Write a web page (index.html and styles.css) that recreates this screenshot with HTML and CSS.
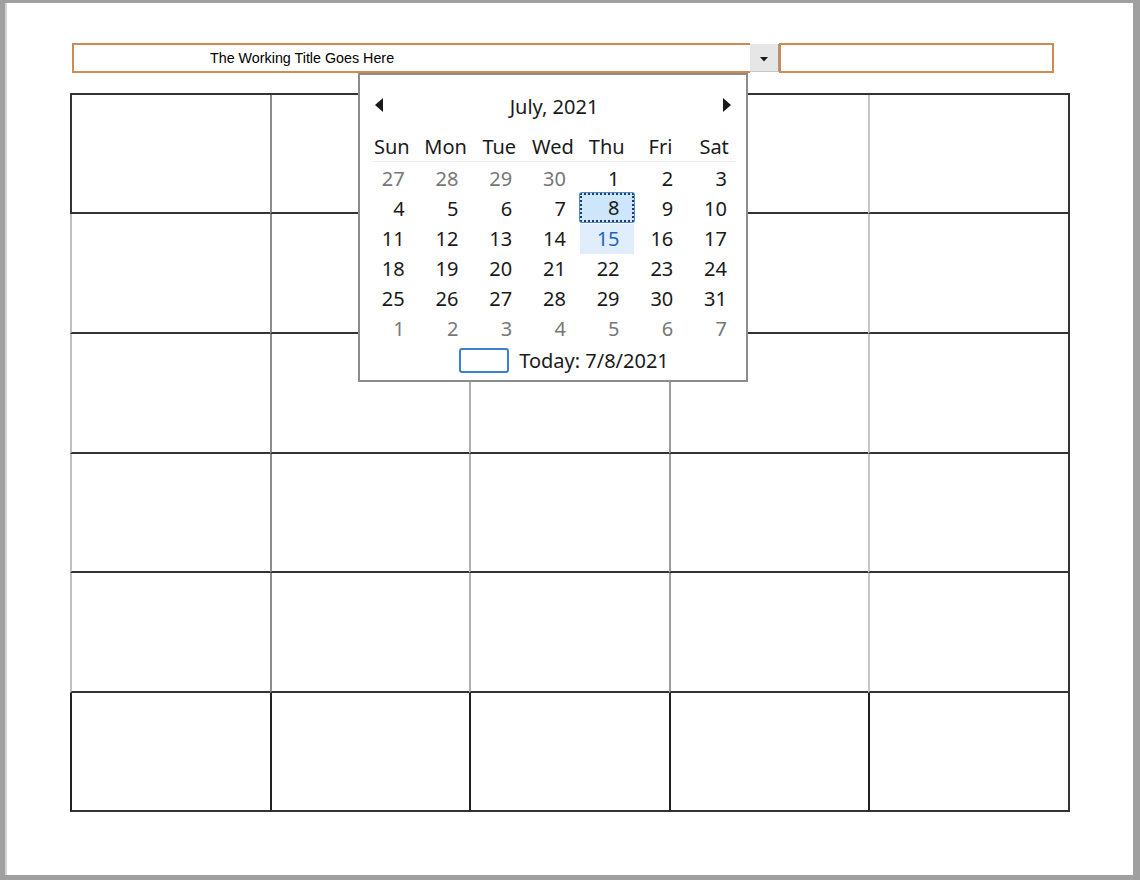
FILE: index.html
```html
<!DOCTYPE html>
<html>
<head>
<meta charset="utf-8">
<title>Calendar</title>
<link rel="stylesheet" href="styles.css">
</head>
<body>
<div class="page">
  <div class="title-row">
    <div class="title-box">The Working Title Goes Here</div>
    <div class="drop-btn">
      <svg width="8" height="5" viewBox="0 0 8 5"><polygon points="0,0 8,0 4,4.5" fill="#1a1a1a"/></svg>
    </div>
    <div class="side-box"></div>
  </div>

  <div class="grid">
    <div class="cell"></div><div class="cell"></div><div class="cell"></div><div class="cell"></div><div class="cell"></div>
    <div class="cell"></div><div class="cell"></div><div class="cell"></div><div class="cell"></div><div class="cell"></div>
    <div class="cell"></div><div class="cell"></div><div class="cell"></div><div class="cell"></div><div class="cell"></div>
    <div class="cell"></div><div class="cell"></div><div class="cell"></div><div class="cell"></div><div class="cell"></div>
    <div class="cell"></div><div class="cell"></div><div class="cell"></div><div class="cell"></div><div class="cell"></div>
    <div class="cell"></div><div class="cell"></div><div class="cell"></div><div class="cell"></div><div class="cell"></div>
  </div>

  <div class="popup">
    <div class="cal-head">
      <svg class="arrow" width="8" height="14" viewBox="0 0 8 14"><polygon points="8,0 8,14 0,7" fill="#1a1a1a"/></svg>
      <div class="month">July, 2021</div>
      <svg class="arrow" width="8" height="14" viewBox="0 0 8 14"><polygon points="0,0 0,14 8,7" fill="#1a1a1a"/></svg>
    </div>
    <div class="dow">
      <span>Sun</span><span>Mon</span><span>Tue</span><span>Wed</span><span>Thu</span><span>Fri</span><span>Sat</span>
    </div>
    <div class="days">
      <span class="other">27</span><span class="other">28</span><span class="other">29</span><span class="other">30</span><span>1</span><span>2</span><span>3</span>
      <span>4</span><span>5</span><span>6</span><span>7</span><span class="sel">8</span><span>9</span><span>10</span>
      <span>11</span><span>12</span><span>13</span><span>14</span><span class="hot">15</span><span>16</span><span>17</span>
      <span>18</span><span>19</span><span>20</span><span>21</span><span>22</span><span>23</span><span>24</span>
      <span>25</span><span>26</span><span>27</span><span>28</span><span>29</span><span>30</span><span>31</span>
      <span class="other">1</span><span class="other">2</span><span class="other">3</span><span class="other">4</span><span class="other">5</span><span class="other">6</span><span class="other">7</span>
    </div>
    <div class="cal-foot">
      <div class="today-box"></div>
      <div class="today-text">Today: 7/8/2021</div>
    </div>
  </div>
</div>
</body>
</html>
```
FILE: styles.css
```css
* { box-sizing: border-box; }
html, body { margin: 0; padding: 0; }
body {
  background: #a0a0a0;
  padding: 3px 7px 5px 5px;
  width: 1140px;
  height: 880px;
  overflow: hidden;
}
.page {
  position: relative;
  background: #fff;
  width: 1128px;
  height: 872px;
  border-left: 2px solid #d4d4d4;
  padding-top: 40px;
  padding-left: 63px;
}
.title-row {
  display: flex;
  height: 30px;
  margin-left: 2px;
}
.title-box {
  width: 678px;
  height: 30px;
  border: 2px solid #cf8a52;
  border-right: none;
  font-family: "Liberation Sans", Arial, sans-serif;
  font-size: 14.3px;
  line-height: 26px;
  padding-left: 136px;
  color: #000;
}
.drop-btn {
  width: 29px;
  height: 28px;
  margin-top: 1px;
  background: #e6e6e6;
  border-right: 1px solid #9a9a9a;
  border-bottom: 1px solid #c8c8c8;
  display: flex;
  align-items: center;
  justify-content: center;
  padding-top: 3px;
}
.side-box {
  width: 275px;
  height: 30px;
  border: 2px solid #cf8a52;
}
.grid {
  margin-top: 20px;
  display: grid;
  grid-template-columns: 200px 199px 200px 199px 202px;
  grid-template-rows: 119px 120px 120px 119px 120px 119px;
  border-top: 2px solid #333;
  width: 1000px;
}
.cell {
  border-left: 2px solid #a8a8a8;
  border-bottom: 2px solid #333;
}
.cell:nth-child(5n+1) { border-left-color: #c0c0c0; }
.cell:nth-child(5n+2) { border-left-color: #8c8c8c; }
.cell:nth-child(5n+3) { border-left-color: #b0b0b0; }
.cell:nth-child(5n+4) { border-left-color: #9c9c9c; }
.cell:nth-child(5n) { border-left-color: #c6c6c6; border-right: 2px solid #333; }
.cell:nth-child(1) { border-left-color: #333; }
.cell:nth-child(n+26) { border-left-color: #222; }

.popup {
  position: absolute;
  left: 351px;
  top: 70px;
  width: 390px;
  height: 309px;
  background: #fff;
  border: 2px solid #8c8c8c;
  font-family: "Noto Sans", "Open Sans", sans-serif;
  font-size: 20px;
  color: #1a1a1a;
  padding: 0 5px;
}
.cal-head {
  display: flex;
  align-items: center;
  justify-content: space-between;
  height: 58px;
  padding: 18px 10px 12px 10px;
}
.cal-head .arrow { margin-top: -4px; }
.month {
  line-height: 28px;
  height: 28px;
  margin-left: 2px;
}
.dow {
  display: grid;
  grid-template-columns: repeat(7, 1fr);
  height: 29px;
  line-height: 27px;
  margin-bottom: 2px;
  text-align: center;
  background: linear-gradient(#ececec, #ececec) no-repeat 6px 100% / calc(100% - 12px) 1px;
}
.days {
  display: grid;
  grid-template-columns: repeat(7, 1fr);
  grid-auto-rows: 30px;
}
.days span {
  text-align: right;
  padding-right: 14px;
  line-height: 30px;
}
.days .other { color: #777; }
.days .sel {
  background: #cde6fb;
  border: 2px dotted #1f3a5c;
  box-shadow: 0 0 0 1px #4f8bd2;
  border-radius: 2px;
  line-height: 26px;
  padding-right: 12px;
  margin-top: -1px;
  height: 29px;
}
.days .hot {
  background: #e0eefc;
  color: #1f64c4;
}
.cal-foot {
  display: flex;
  align-items: center;
  justify-content: center;
  gap: 10px;
  height: 31px;
  padding-left: 22px;
  margin-top: 1px;
}
.today-box {
  width: 50px;
  height: 25px;
  border: 2px solid #3c7fd0;
  border-radius: 3px;
}
.today-text {
  line-height: 28px;
}
```
